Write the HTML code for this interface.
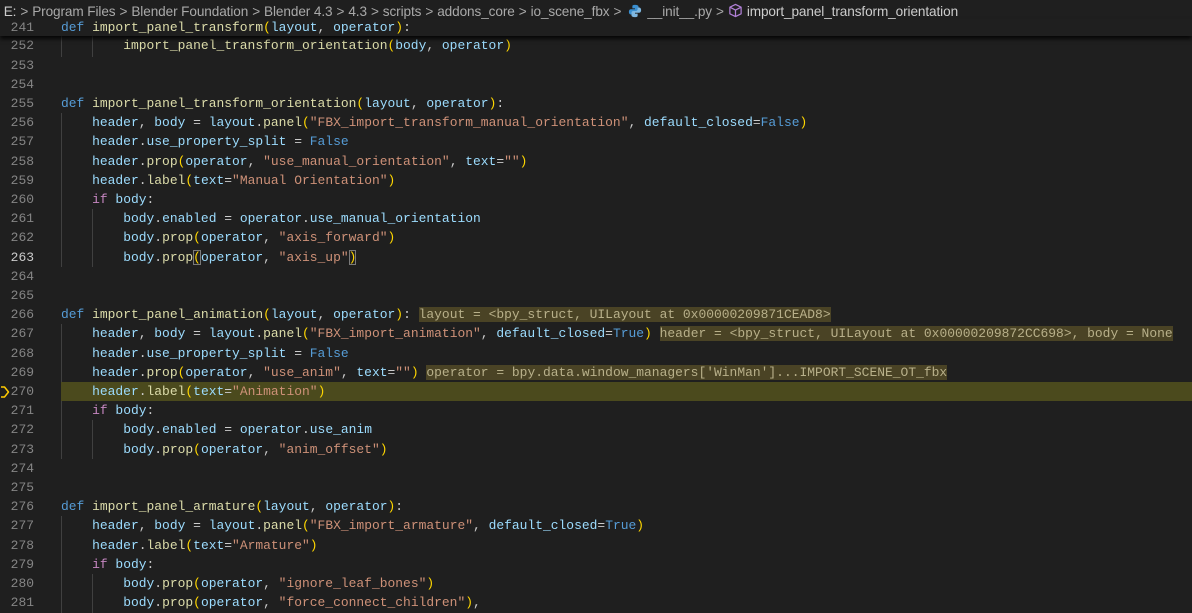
<!DOCTYPE html>
<html><head><meta charset="utf-8"><style>
html,body{margin:0;padding:0;background:#1f1f1f;width:1192px;height:613px;overflow:hidden}
body{position:relative;font-family:"Liberation Mono",monospace;font-size:12.96px;color:#cccccc}
.bc{position:absolute;left:0;top:0;height:18px;width:1192px;background:#1f1f1f;font-family:"Liberation Sans",sans-serif;font-size:13.6px;letter-spacing:-0.1px;color:#a9a9a9;line-height:24px;white-space:nowrap;z-index:1}
.bc .sep{color:#a9a9a9;margin:0 4px}
.bc .w{color:#cccccc}
.line{position:absolute;left:0;width:1192px;height:19.2px;line-height:19.2px;white-space:pre}
.ln{position:absolute;left:0;width:34px;text-align:right;color:#858585}
.code{position:absolute;left:61px}
.k{color:#569cd6}.f{color:#dcdcaa}.v{color:#9cdcfe}.s{color:#ce9178}.p{color:#ffd700}.c{color:#c586c0}
.iv{background:#4a4325;color:#b8b08a}
.g{position:absolute;width:1px;background:#404040}
.sticky{position:absolute;left:0;top:19px;height:17px;overflow:hidden;width:1192px;background:#1f1f1f;z-index:2;box-shadow:0 3px 4px rgba(0,0,0,.8)}
.box{outline:1px solid #7a7a7a;outline-offset:-1px}
</style></head><body>
<div class="bc">&nbsp;<span class="w">E:</span><span class="sep">&gt;</span>Program Files<span class="sep">&gt;</span>Blender Foundation<span class="sep">&gt;</span>Blender 4.3<span class="sep">&gt;</span>4.3<span class="sep">&gt;</span>scripts<span class="sep">&gt;</span>addons_core<span class="sep">&gt;</span>io_scene_fbx<span class="sep">&gt;</span><svg width="14" height="14" viewBox="0 0 16 16" style="vertical-align:-2px;margin:0 5px 0 3px"><path d="M8 1C5 1 5 2 5 3v2h3v1H3.5C2 6 1 7 1 9s1 3 2.5 3H5v-2c0-1 1-2 2-2h3c1 0 2-1 2-2V3c0-1-1-2-4-2z" fill="#3a8fd0"/><path d="M8 15c3 0 3-1 3-2v-2H8v-1h4.5c1.5 0 2.5-1 2.5-3s-1-3-2.5-3H11v2c0 1-1 2-2 2H6c-1 0-2 1-2 2v3c0 1 1 2 4 2z" fill="#7fb7e0"/></svg>__init__.py<span class="sep">&gt;</span><svg width="15" height="15" viewBox="0 0 16 16" style="vertical-align:-2px;margin-right:4px"><path d="M8 1.5L14 4.5V11.5L8 14.5L2 11.5V4.5Z M2 4.5L8 7.5L14 4.5 M8 7.5V14.5" fill="none" stroke="#b180d7" stroke-width="1.3" stroke-linejoin="round"/></svg><span class="w">import_panel_transform_orientation</span></div>

<div class="sticky"><div class="line" style="top:-1px;height:19px;line-height:19px"><span class="ln">241</span><span class="code"><span class="k">def</span> <span class="f">import_panel_transform</span><span class="p">(</span><span class="v">layout</span>, <span class="v">operator</span><span class="p">)</span>:</span></div></div>

<div class="g" style="left:61px;top:36px;height:21px"></div><div class="g" style="left:92px;top:36px;height:21px"></div>
<div class="g" style="left:61px;top:113px;height:154px"></div><div class="g" style="left:92px;top:209px;height:58px"></div>
<div class="g" style="left:61px;top:324px;height:135px"></div><div class="g" style="left:92px;top:420px;height:39px"></div>
<div class="g" style="left:61px;top:516px;height:97px"></div><div class="g" style="left:92px;top:574px;height:39px"></div>

<div class="line" style="top:36.4px"><span class="ln">252</span><span class="code">        <span class="f">import_panel_transform_orientation</span><span class="p">(</span><span class="v">body</span>, <span class="v">operator</span><span class="p">)</span></span></div>
<div class="line" style="top:55.6px"><span class="ln">253</span></div>
<div class="line" style="top:74.8px"><span class="ln">254</span></div>
<div class="line" style="top:94px"><span class="ln">255</span><span class="code"><span class="k">def</span> <span class="f">import_panel_transform_orientation</span><span class="p">(</span><span class="v">layout</span>, <span class="v">operator</span><span class="p">)</span>:</span></div>
<div class="line" style="top:113.2px"><span class="ln">256</span><span class="code">    <span class="v">header</span>, <span class="v">body</span> = <span class="v">layout</span>.<span class="f">panel</span><span class="p">(</span><span class="s">"FBX_import_transform_manual_orientation"</span>, <span class="v">default_closed</span>=<span class="k">False</span><span class="p">)</span></span></div>
<div class="line" style="top:132.4px"><span class="ln">257</span><span class="code">    <span class="v">header</span>.<span class="v">use_property_split</span> = <span class="k">False</span></span></div>
<div class="line" style="top:151.6px"><span class="ln">258</span><span class="code">    <span class="v">header</span>.<span class="f">prop</span><span class="p">(</span><span class="v">operator</span>, <span class="s">"use_manual_orientation"</span>, <span class="v">text</span>=<span class="s">""</span><span class="p">)</span></span></div>
<div class="line" style="top:170.8px"><span class="ln">259</span><span class="code">    <span class="v">header</span>.<span class="f">label</span><span class="p">(</span><span class="v">text</span>=<span class="s">"Manual Orientation"</span><span class="p">)</span></span></div>
<div class="line" style="top:190px"><span class="ln">260</span><span class="code">    <span class="c">if</span> <span class="v">body</span>:</span></div>
<div class="line" style="top:209.2px"><span class="ln">261</span><span class="code">        <span class="v">body</span>.<span class="v">enabled</span> = <span class="v">operator</span>.<span class="v">use_manual_orientation</span></span></div>
<div class="line" style="top:228.4px"><span class="ln">262</span><span class="code">        <span class="v">body</span>.<span class="f">prop</span><span class="p">(</span><span class="v">operator</span>, <span class="s">"axis_forward"</span><span class="p">)</span></span></div>
<div class="line" style="top:247.6px"><span class="ln" style="color:#cccccc">263</span><span class="code">        <span class="v">body</span>.<span class="f">prop</span><span class="p box">(</span><span class="v">operator</span>, <span class="s">"axis_up"</span><span class="p box">)</span></span></div>
<div class="line" style="top:266.8px"><span class="ln">264</span></div>
<div class="line" style="top:286px"><span class="ln">265</span></div>
<div class="line" style="top:305.2px"><span class="ln">266</span><span class="code"><span class="k">def</span> <span class="f">import_panel_animation</span><span class="p">(</span><span class="v">layout</span>, <span class="v">operator</span><span class="p">)</span>: <span class="iv">layout = &lt;bpy_struct, UILayout at 0x00000209871CEAD8&gt;</span></span></div>
<div class="line" style="top:324.4px"><span class="ln">267</span><span class="code">    <span class="v">header</span>, <span class="v">body</span> = <span class="v">layout</span>.<span class="f">panel</span><span class="p">(</span><span class="s">"FBX_import_animation"</span>, <span class="v">default_closed</span>=<span class="k">True</span><span class="p">)</span> <span class="iv">header = &lt;bpy_struct, UILayout at 0x00000209872CC698&gt;, body = None</span></span></div>
<div class="line" style="top:343.6px"><span class="ln">268</span><span class="code">    <span class="v">header</span>.<span class="v">use_property_split</span> = <span class="k">False</span></span></div>
<div class="line" style="top:362.8px"><span class="ln">269</span><span class="code">    <span class="v">header</span>.<span class="f">prop</span><span class="p">(</span><span class="v">operator</span>, <span class="s">"use_anim"</span>, <span class="v">text</span>=<span class="s">""</span><span class="p">)</span> <span class="iv">operator = bpy.data.window_managers['WinMan']...IMPORT_SCENE_OT_fbx</span></span></div>
<div class="line" style="top:382px;left:61px;width:1131px;background:#4b4a1d"></div>
<div class="line" style="top:382px"><svg style="position:absolute;left:0;top:3px" width="10" height="14" viewBox="0 0 10 14"><path d="M1 2H4.5L8.5 7L4.5 12H1" fill="none" stroke="#ffcc00" stroke-width="1.5" stroke-linejoin="round"/></svg><span class="ln">270</span><span class="code">    <span class="v">header</span>.<span class="f">label</span><span class="p">(</span><span class="v">text</span>=<span class="s">"Animation"</span><span class="p">)</span></span></div>
<div class="line" style="top:401.2px"><span class="ln">271</span><span class="code">    <span class="c">if</span> <span class="v">body</span>:</span></div>
<div class="line" style="top:420.4px"><span class="ln">272</span><span class="code">        <span class="v">body</span>.<span class="v">enabled</span> = <span class="v">operator</span>.<span class="v">use_anim</span></span></div>
<div class="line" style="top:439.6px"><span class="ln">273</span><span class="code">        <span class="v">body</span>.<span class="f">prop</span><span class="p">(</span><span class="v">operator</span>, <span class="s">"anim_offset"</span><span class="p">)</span></span></div>
<div class="line" style="top:458.8px"><span class="ln">274</span></div>
<div class="line" style="top:478px"><span class="ln">275</span></div>
<div class="line" style="top:497.2px"><span class="ln">276</span><span class="code"><span class="k">def</span> <span class="f">import_panel_armature</span><span class="p">(</span><span class="v">layout</span>, <span class="v">operator</span><span class="p">)</span>:</span></div>
<div class="line" style="top:516.4px"><span class="ln">277</span><span class="code">    <span class="v">header</span>, <span class="v">body</span> = <span class="v">layout</span>.<span class="f">panel</span><span class="p">(</span><span class="s">"FBX_import_armature"</span>, <span class="v">default_closed</span>=<span class="k">True</span><span class="p">)</span></span></div>
<div class="line" style="top:535.6px"><span class="ln">278</span><span class="code">    <span class="v">header</span>.<span class="f">label</span><span class="p">(</span><span class="v">text</span>=<span class="s">"Armature"</span><span class="p">)</span></span></div>
<div class="line" style="top:554.8px"><span class="ln">279</span><span class="code">    <span class="c">if</span> <span class="v">body</span>:</span></div>
<div class="line" style="top:574px"><span class="ln">280</span><span class="code">        <span class="v">body</span>.<span class="f">prop</span><span class="p">(</span><span class="v">operator</span>, <span class="s">"ignore_leaf_bones"</span><span class="p">)</span></span></div>
<div class="line" style="top:593.2px"><span class="ln">281</span><span class="code">        <span class="v">body</span>.<span class="f">prop</span><span class="p">(</span><span class="v">operator</span>, <span class="s">"force_connect_children"</span><span class="p">)</span>,</span></div>
</body></html>
